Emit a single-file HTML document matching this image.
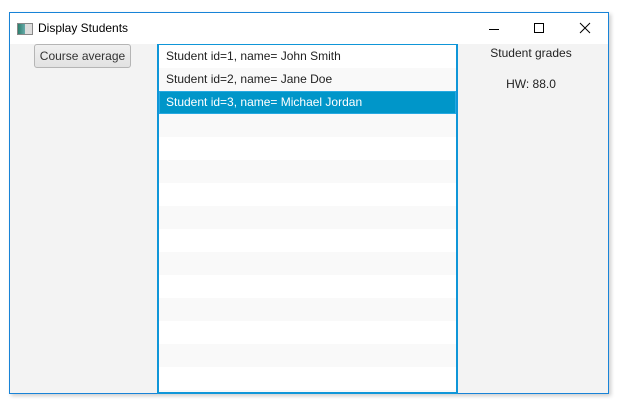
<!DOCTYPE html>
<html><head><style>
body{margin:0;width:633px;height:412px;background:#fff;position:relative;overflow:hidden;font-family:"Segoe UI","Liberation Sans",sans-serif;font-size:12px;color:#222}
.win{position:absolute;left:9px;top:12px;width:598px;height:380px;border:1px solid #1883d7;background:#f3f3f3;box-shadow:2px 2px 4px rgba(0,0,0,.2)}
.title{position:absolute;left:0;top:0;width:598px;height:31px;background:#fff}
.title .t{position:absolute;left:28px;top:8px;font-size:12px;color:#000}
.ico{position:absolute;left:7px;top:10px;width:14px;height:10px;border:1px solid #888;background:linear-gradient(90deg,#2d7f6d 0,#6aa 50%,#ddd 50%)}
.btn{position:absolute;left:24px;top:31px;width:95px;height:22px;border:1px solid #b5b5b5;border-radius:3px;background:linear-gradient(#f0f0f0,#e2e2e2);text-align:center;line-height:22px;color:#333}
.list{position:absolute;left:147px;top:31px;width:297px;height:347px;border:2px solid #0f96d8;border-top-width:1px;background:#fff;overflow:hidden}
.row{height:23px;line-height:23px;padding-left:7px;white-space:nowrap}
.row.g{background:#f9f9f9}
.row.s{background:#0096c9;color:#fff;outline:1px solid #27a9e1;outline-offset:-1px}
.lab{position:absolute;left:444px;width:154px;text-align:center}
</style></head><body>
<div class="win">
<div class="title"><div class="ico"></div><div class="t">Display Students</div>
<svg style="position:absolute;left:478px;top:10px" width="12" height="12"><path d="M1 6.5H11" stroke="#000"/></svg>
<svg style="position:absolute;left:523px;top:9px" width="12" height="12"><rect x="1.5" y="1.5" width="9" height="9" fill="none" stroke="#000"/></svg>
<svg style="position:absolute;left:569px;top:9px" width="12" height="12"><path d="M1 1L11 11M11 1L1 11" stroke="#000"/></svg>
</div>
<div class="btn">Course average</div>
<div class="list">
<div class="row">Student id=1, name= John Smith</div>
<div class="row g">Student id=2, name= Jane Doe</div>
<div class="row s">Student id=3, name= Michael Jordan</div>
<div class="row g"></div><div class="row"></div><div class="row g"></div><div class="row"></div><div class="row g"></div><div class="row"></div><div class="row g"></div><div class="row"></div><div class="row g"></div><div class="row"></div><div class="row g"></div><div class="row"></div><div class="row g"></div>
</div>
<div class="lab" style="top:33px">Student grades</div>
<div class="lab" style="top:64px">HW: 88.0</div>
</div>
</body></html>
